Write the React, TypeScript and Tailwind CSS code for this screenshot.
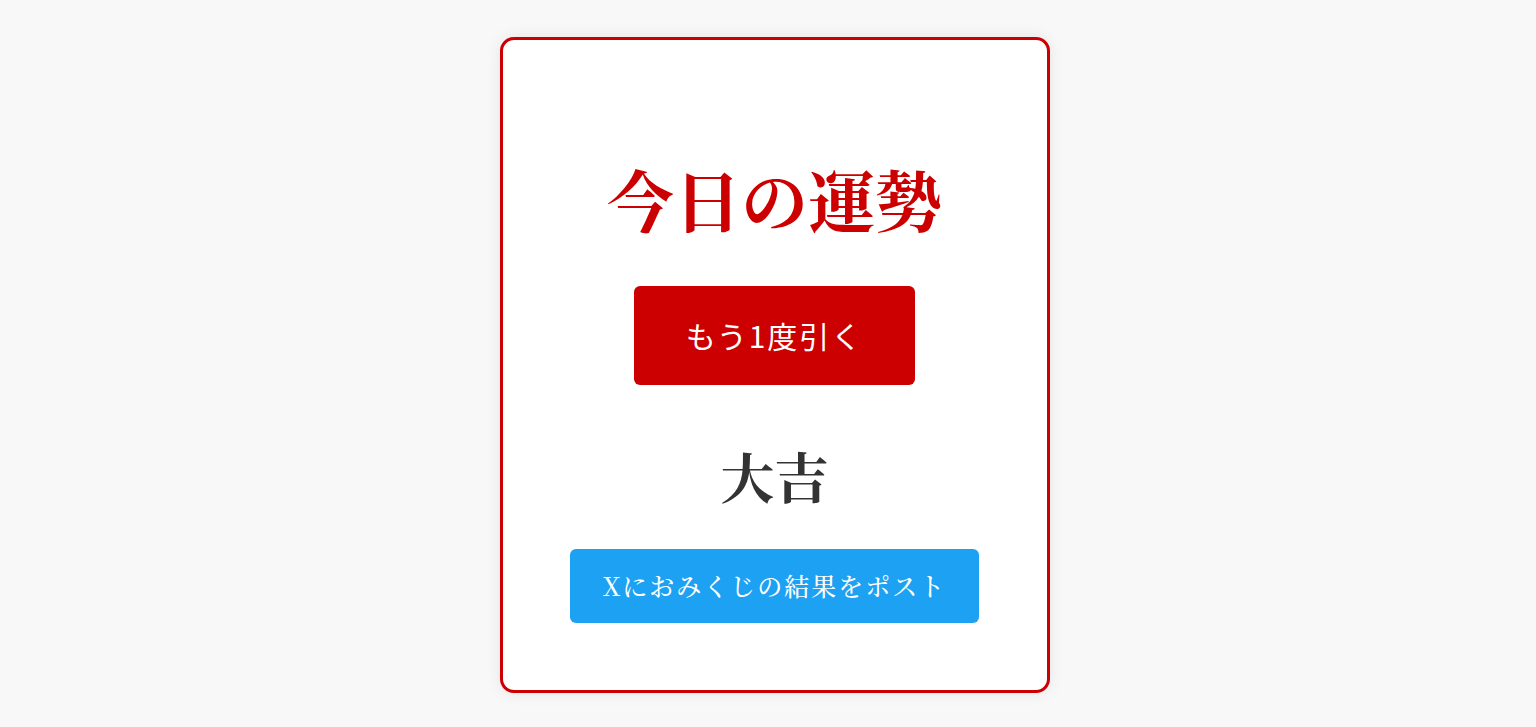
export default function App() {
  return (
    <div className="min-h-screen bg-[#f8f8f8] flex justify-center pt-[37px] pl-[13px]">
      <div className="w-[550px] h-[656px] bg-white border-[3px] border-[#cc0000] rounded-[14px] shadow-[0_0_16px_rgba(0,0,0,0.08)] flex flex-col items-center pt-[108px]">
        <h1 className="h-[100px] flex items-center text-[67px] font-bold text-[#cc0000] font-['Noto_Serif_CJK_JP','Liberation_Serif',serif]">
          今日の運勢
        </h1>
        <button className="mt-[38px] w-[281px] h-[99px] bg-[#cc0000] text-white text-[30px] rounded-[6px] flex items-center justify-center tracking-[2px] font-['Noto_Sans_CJK_JP','Noto_Sans',sans-serif]">
          もう1度引く
        </button>
        <div className="mt-[50px] h-[81px] flex items-center text-[54px] font-bold text-[#333333] font-['Noto_Serif_CJK_JP','Liberation_Serif',serif]">
          大吉
        </div>
        <button className="mt-[33px] w-[409px] h-[74px] bg-[#1da1f2] text-white text-[25px] font-medium rounded-[6px] flex items-center justify-center tracking-[2px] font-['Noto_Serif_CJK_JP','Liberation_Serif',serif]">
          Xにおみくじの結果をポスト
        </button>
      </div>
    </div>
  )
}
